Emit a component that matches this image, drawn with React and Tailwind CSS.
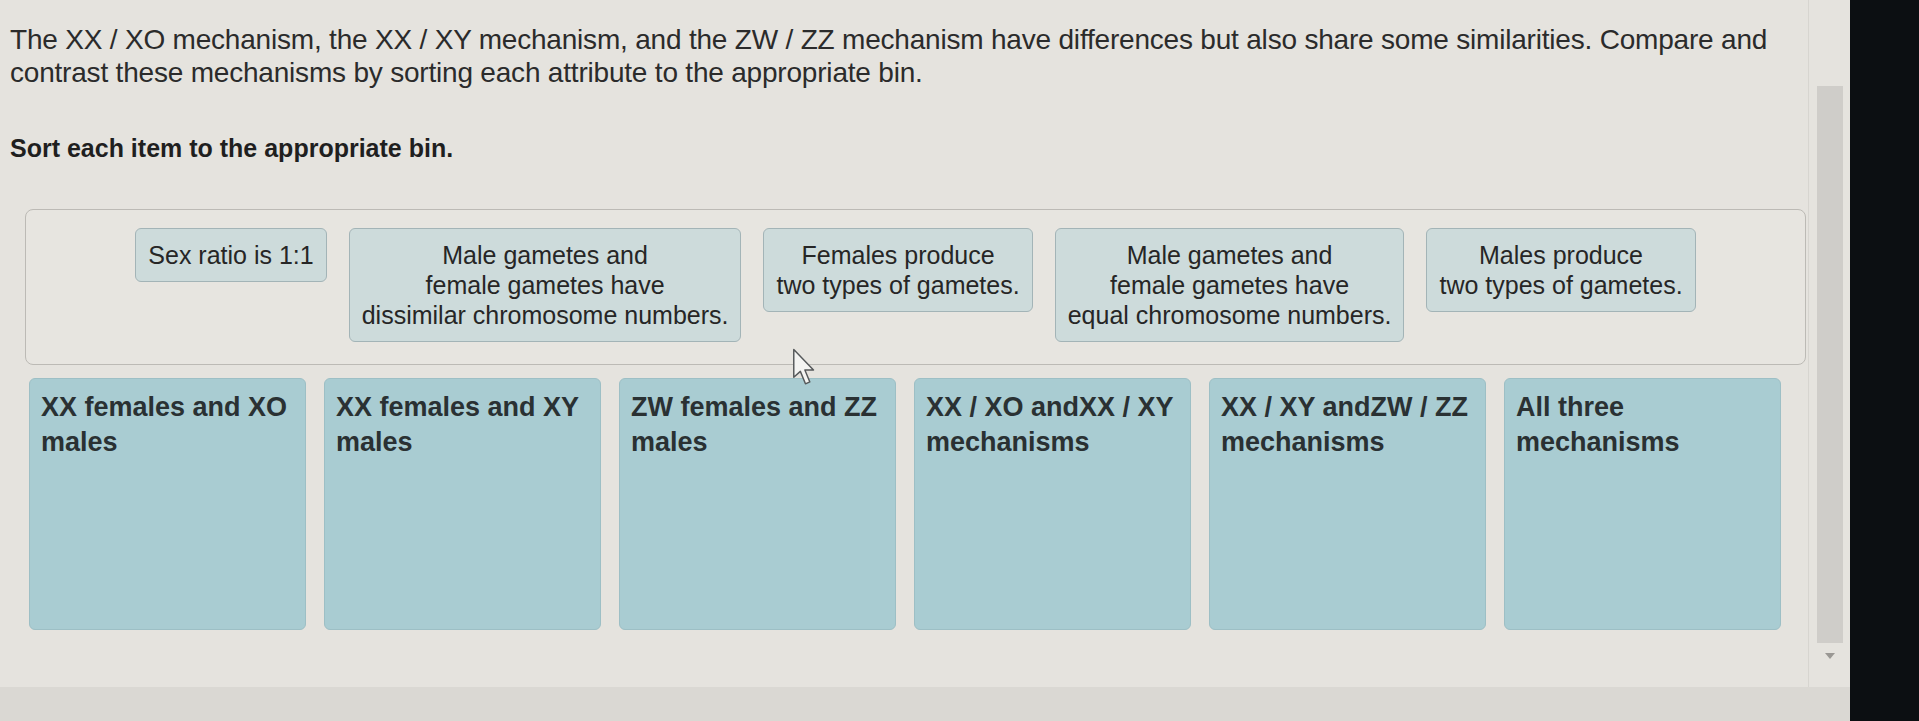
import React from "react";

const items = [
  ["Sex ratio is 1:1"],
  ["Male gametes and", "female gametes have", "dissimilar chromosome numbers."],
  ["Females produce", "two types of gametes."],
  ["Male gametes and", "female gametes have", "equal chromosome numbers."],
  ["Males produce", "two types of gametes."],
];

const bins = [
  "XX females and XO males",
  "XX females and XY males",
  "ZW females and ZZ males",
  "XX / XO andXX / XY mechanisms",
  "XX / XY andZW / ZZ mechanisms",
  "All three mechanisms",
];

export default function App() {
  return (
    <div
      className="relative flex h-[721px] w-[1919px] overflow-hidden bg-[#e5e3de] text-[#2b2b2b]"
      style={{ fontFamily: '"Liberation Sans", Arial, sans-serif' }}
    >
      <main className="flex w-[1808px] flex-col pl-[10px] pt-[23px]">
        <p className="w-[1790px] text-[28px] leading-[33px] tracking-[-0.2px]">
          The XX / XO mechanism, the XX / XY mechanism, and the ZW / ZZ
          mechanism have differences but also share some similarities. Compare
          and contrast these mechanisms by sorting each attribute to the
          appropriate bin.
        </p>

        <h2 className="mt-[43px] text-[25px] font-bold leading-[33px] text-[#1f1f1f]">
          Sort each item to the appropriate bin.
        </h2>

        <div className="ml-[15px] mt-[44px] flex w-[1781px] items-start justify-center gap-[22px] rounded-lg border border-[#bcbab5] bg-[#e7e5e0] pb-[22px] pt-[18px]">
          {items.map((lines, i) => (
            <div
              key={i}
              className="rounded-md border border-[#a3b4b7] bg-[#cddbdb] px-[12px] py-[11px] text-center text-[25px] leading-[30px] text-[#262626]"
            >
              {lines.map((line) => (
                <div key={line} className="whitespace-nowrap">
                  {line}
                </div>
              ))}
            </div>
          ))}
        </div>

        <div className="ml-[19px] mt-[13px] grid w-[1752px] grid-cols-6 gap-[18px]">
          {bins.map((label) => (
            <div
              key={label}
              className="h-[252px] rounded-md border border-[#9dbfc5] bg-[#a9ccd2] px-[11px] pt-[11px] text-[27px] font-bold leading-[35px] text-[#2a3133]"
            >
              {label}
            </div>
          ))}
        </div>
      </main>

      <div className="flex w-[42px] flex-col items-center border-l border-[#d7d5d0] pt-[86px]">
        <div className="h-[557px] w-[26px] bg-[#cfcdc9]" />
        <svg viewBox="0 0 10 6" className="mt-[10px] h-[6px] w-[10px]">
          <path d="M0 0 L10 0 L5 6 Z" fill="#9a9894" />
        </svg>
      </div>

      <div className="flex-1 bg-[#0c0f12]" />

      <div className="absolute bottom-0 left-0 h-[34px] w-[1850px] bg-[#dad8d3]" />

      <svg
        viewBox="0 0 16 26"
        className="absolute left-[792px] top-[348px] h-[38px] w-[24px]"
      >
        <path
          d="M1 1 L1 20 L5.5 16 L9 24.5 L12 23.2 L8.6 15 L14.5 15 Z"
          fill="#f4f4f2"
          stroke="#55585a"
          strokeWidth="1"
          strokeLinejoin="round"
        />
      </svg>
    </div>
  );
}
